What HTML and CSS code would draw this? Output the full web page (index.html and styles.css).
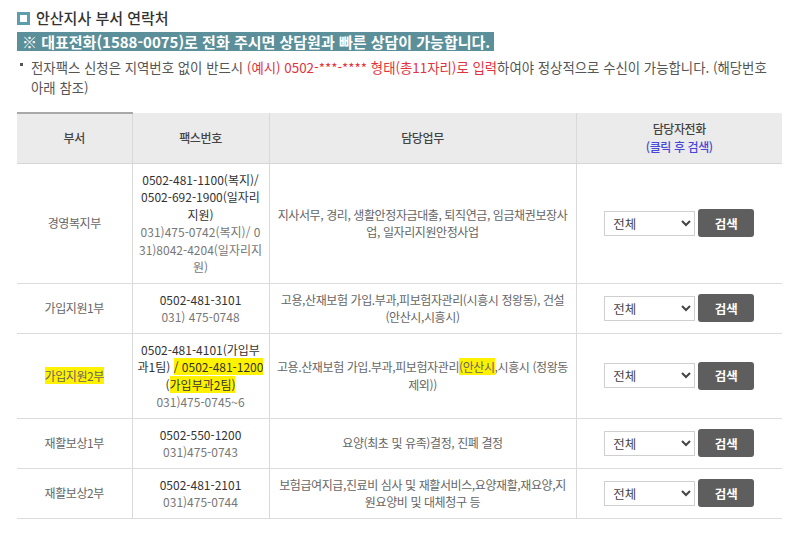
FILE: index.html
```html
<!DOCTYPE html>
<html lang="ko">
<head>
<meta charset="utf-8">
<link rel="stylesheet" href="styles.css">
</head>
<body>
<div class="page">
  <h3 class="title"><span class="title-icon"></span>안산지사 부서 연락처</h3>
  <p class="banner"><span class="banner-text">※ 대표전화(1588-0075)로 전화 주시면 상담원과 빠른 상담이 가능합니다.</span></p>
  <div class="note">
    <span class="bullet"></span>
    <p class="note-text">전자팩스 신청은 지역번호 없이 반드시 <span class="red">(예시) 0502-***-**** 형태(총11자리)로 입력</span>하여야 정상적으로 수신이 가능합니다. (해당번호<br>아래 참조)</p>
  </div>

  <table class="contacts">
    <colgroup>
      <col class="c1"><col class="c2"><col class="c3"><col class="c4">
    </colgroup>
    <thead>
      <tr>
        <th class="first">부서</th>
        <th>팩스번호</th>
        <th>담당업무</th>
        <th>담당자전화<br><span class="blue">(클릭 후 검색)</span></th>
      </tr>
    </thead>
    <tbody>
      <tr>
        <td class="dept">경영복지부</td>
        <td class="fax"><span class="main">0502-481-1100(복지)/<br>0502-692-1900(일자리<br>지원)</span><br><span class="sub">031)475-0742(복지)/ 0<br>31)8042-4204(일자리지<br>원)</span></td>
        <td class="task">지사서무, 경리, 생활안정자금대출, 퇴직연금, 임금채권보장사<br>업, 일자리지원안정사업</td>
        <td class="search"><div class="search-box"><select class="sel"><option>전체</option></select><button class="btn">검색</button></div></td>
      </tr>
      <tr>
        <td class="dept">가입지원1부</td>
        <td class="fax"><span class="main">0502-481-3101</span><br><span class="sub">031) 475-0748</span></td>
        <td class="task">고용,산재보험 가입.부과,피보험자관리(시흥시 정왕동), 건설<br>(안산시,시흥시)</td>
        <td class="search"><div class="search-box"><select class="sel"><option>전체</option></select><button class="btn">검색</button></div></td>
      </tr>
      <tr>
        <td class="dept"><mark class="hl">가입지원2부</mark></td>
        <td class="fax"><span class="main">0502-481-4101(가입부<br>과1팀) <mark class="hl">/ 0502-481-1200</mark><br>(<mark class="hl">가입부과2팀)</mark></span><br><span class="sub">031)475-0745~6</span></td>
        <td class="task">고용.산재보험 가입.부과,피보험자관리<mark class="hl">(안산시</mark>,시흥시 (정왕동<br>제외))</td>
        <td class="search"><div class="search-box"><select class="sel"><option>전체</option></select><button class="btn">검색</button></div></td>
      </tr>
      <tr>
        <td class="dept">재활보상1부</td>
        <td class="fax"><span class="main">0502-550-1200</span><br><span class="sub">031)475-0743</span></td>
        <td class="task">요양(최초 및 유족)결정, 진폐 결정</td>
        <td class="search"><div class="search-box"><select class="sel"><option>전체</option></select><button class="btn">검색</button></div></td>
      </tr>
      <tr>
        <td class="dept">재활보상2부</td>
        <td class="fax"><span class="main">0502-481-2101</span><br><span class="sub">031)475-0744</span></td>
        <td class="task">보험급여지급,진료비 심사 및 재활서비스,요양재활,재요양,지<br>원요양비 및 대체청구 등</td>
        <td class="search"><div class="search-box"><select class="sel"><option>전체</option></select><button class="btn">검색</button></div></td>
      </tr>
    </tbody>
  </table>
</div>
</body>
</html>
```

FILE: styles.css
```css
* { box-sizing: border-box; }
html, body { margin: 0; padding: 0; background: #fff; }
body {
  font-family: "Noto Sans CJK KR", "Noto Sans", sans-serif;
  color: #555;
}
.page { padding: 7px 18px 0 17px; }

.title {
  margin: 0;
  display: flex;
  align-items: center;
  gap: 6px;
  font-size: 15px;
  font-weight: 500;
  color: #333;
  line-height: 22px;
}
.title-icon {
  width: 13px;
  height: 13px;
  border: 3px solid #5c9eac;
  background: #fff;
  flex: none;
}

.banner { margin: 3px 0 0; line-height: 19px; }
.banner-text {
  display: inline-block;
  background: #5b8f99;
  color: #fff;
  font-weight: 700;
  font-size: 15px;
  line-height: 19px;
  padding: 0 4px 0 5px;
}

.note { display: flex; margin-top: 6px; }
.bullet {
  width: 3px; height: 3px; background: #555;
  margin: 6px 8px 0 3px;
  flex: none;
}
.note-text {
  margin: 0;
  font-size: 13.4px;
  line-height: 20px;
  color: #555;
}
.red { color: #e2323d; }

.contacts {
  margin-top: 15px;
  width: 765px;
  border-collapse: collapse;
  table-layout: fixed;
  font-size: 12px;
  letter-spacing: -0.4px;
}
.c1 { width: 115px; }
.c2 { width: 137px; }
.c3 { width: 307px; }
.c4 { width: 206px; }

.contacts th {
  background: #ebebeb;
  font-weight: 500;
  color: #444;
  height: 50px;
  line-height: 18px;
  border-bottom: 1px solid #d6d6d6;
  border-left: 1px solid #d9d9d9;
  font-size: 12px;
}
.contacts th.first { border-left: none; border-top: 2px solid #a9a9a9; }
.blue { color: #4646d9; }

.contacts td {
  text-align: center;
  vertical-align: middle;
  padding: 7px 4px;
  line-height: 17.5px;
  border-bottom: 1px solid #dcdcdc;
  border-left: 1px solid #d9d9d9;
}
.contacts td.dept { border-left: none; color: #666; }
.contacts td.fax { letter-spacing: 0; }
.fax .main { color: #333; font-weight: 400; }
.fax .sub { color: #777; }
.task { color: #666; white-space: nowrap; }

.hl { background: #fff200; color: inherit; padding: 0; }

.search-box { display: flex; align-items: center; justify-content: center; gap: 3px; }
.sel {
  width: 91px;
  height: 25px;
  border: 1px solid #cfcfcf;
  border-radius: 0;
  background: #fff;
  font-family: inherit;
  font-size: 12.5px;
  color: #444;
  padding-left: 4px;
}
.btn {
  width: 56px;
  height: 28px;
  border: none;
  border-radius: 3px;
  background: #5e5e5e;
  color: #fff;
  font-family: inherit;
  font-weight: 700;
  font-size: 12.5px;
  padding: 0;
}
```
